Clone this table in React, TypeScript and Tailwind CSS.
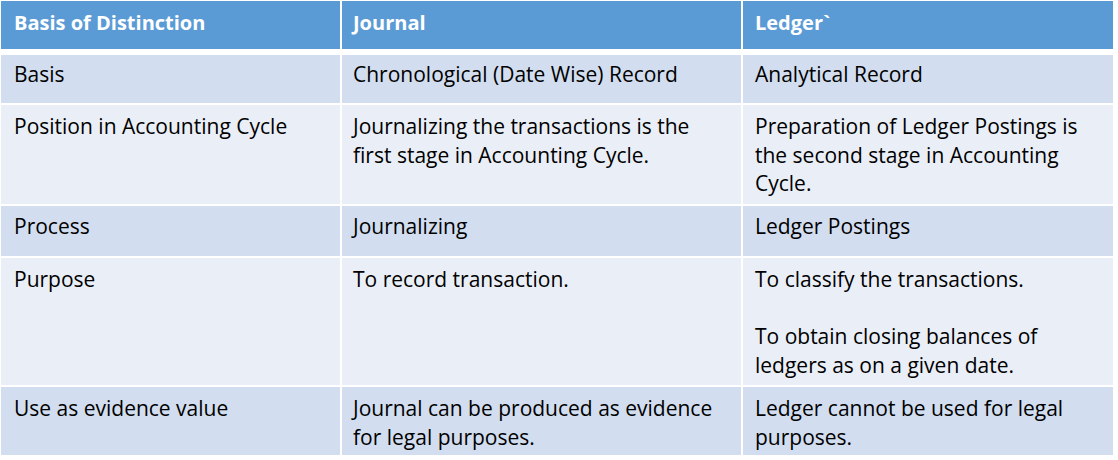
import React from "react";

const rows: { h: string; bg: string; pt: string; cells: React.ReactNode[] }[] = [
  {
    h: "h-[48px]",
    bg: "bg-[#d2deef]",
    pt: "pt-[5px]",
    cells: ["Basis", "Chronological (Date Wise) Record", "Analytical Record"],
  },
  {
    h: "h-[99px]",
    bg: "bg-[#eaeff7]",
    pt: "pt-[7px]",
    cells: [
      "Position in Accounting Cycle",
      <>
        Journalizing the transactions is the
        <br />
        first stage in Accounting Cycle.
      </>,
      <>
        Preparation of Ledger Postings is
        <br />
        the second stage in Accounting
        <br />
        Cycle.
      </>,
    ],
  },
  {
    h: "h-[50px]",
    bg: "bg-[#d2deef]",
    pt: "pt-[6px]",
    cells: ["Process", "Journalizing", "Ledger Postings"],
  },
  {
    h: "h-[127px]",
    bg: "bg-[#eaeff7]",
    pt: "pt-[7px]",
    cells: [
      "Purpose",
      "To record transaction.",
      <>
        To classify the transactions.
        <br />
        <br />
        To obtain closing balances of
        <br />
        ledgers as on a given date.
      </>,
    ],
  },
  {
    h: "h-[68px]",
    bg: "bg-[#d2deef]",
    pt: "pt-[7px]",
    cells: [
      "Use as evidence value",
      <>
        Journal can be produced as evidence
        <br />
        for legal purposes.
      </>,
      <>
        Ledger cannot be used for legal
        <br />
        purposes.
      </>,
    ],
  },
];

const pads = ["pl-[13px]", "pl-[11px]", "pl-[12px]"];

export default function App() {
  return (
    <div
      className="w-[1118px] h-[460px] bg-white pt-[1px] pl-[1px] overflow-hidden"
      style={{ fontFamily: "'Open Sans', 'Liberation Sans', sans-serif" }}
    >
      <div className="w-[1112px] flex flex-col">
        <div className="grid grid-cols-[339px_399px_370px] gap-x-[2px] h-[48px] mb-[6px]">
          {["Basis of Distinction", "Journal", "Ledger`"].map((t, i) => (
            <div
              key={i}
              className={`bg-[#5b9bd5] text-white font-bold text-[20px] leading-[28.6px] pt-[8px] ${pads[i]}`}
            >
              {t}
            </div>
          ))}
        </div>
        <div className="flex flex-col gap-y-[2px]">
          {rows.map((r, ri) => (
            <div
              key={ri}
              className={`grid grid-cols-[339px_399px_370px] gap-x-[2px] ${r.h}`}
            >
              {r.cells.map((c, ci) => (
                <div
                  key={ci}
                  className={`${r.bg} text-black text-[21px] leading-[28.6px] ${r.pt} ${pads[ci]}`}
                >
                  {c}
                </div>
              ))}
            </div>
          ))}
        </div>
      </div>
    </div>
  );
}
